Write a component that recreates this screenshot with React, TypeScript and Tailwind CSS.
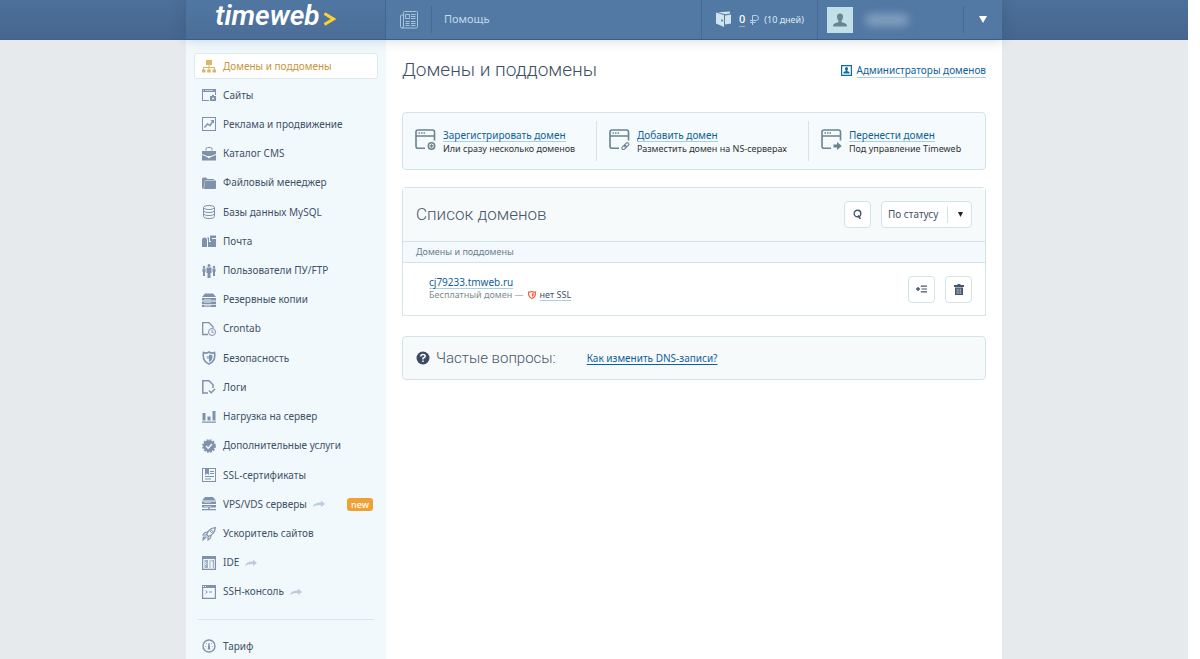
import React from 'react';

type IconProps = { className?: string };

function Svg({ size = 14, className = '', children }: { size?: number; className?: string; children: React.ReactNode }) {
  return (
    <svg width={size} height={size} viewBox={`0 0 ${size} ${size}`} fill="currentColor" className={`shrink-0 ${className}`} aria-hidden="true">
      {children}
    </svg>
  );
}

const icons: Record<string, React.ReactNode> = {
  domains: (
    <>
      <path d="M4 1h6v5H4z" />
      <path d="M6.500 6h1v2H13v3h-1V9H7.500v2h-1V9H2v2H1V8h5.500z" />
      <path d="M0 10.500h3.500v3H0zM5.200 10.500h3.600v3H5.200zM10.500 10.500H14v3h-3.500z" />
    </>
  ),
  sites: (
    <>
      <path d="M0 1h14v6h-1V4H1v8h6v1H0z" />
      <path d="M1 2h1v1H1zM3 2h8v1H3z" fill="#f1f9fd" opacity="0.6" />
      <path d="M8 8h2V7h2v1h2v5H8z" />
      <circle cx="11" cy="10.500" r="1" fill="#f1f9fd" />
    </>
  ),
  promo: (
    <>
      <path d="M0 0h14v14H0zM1 1v12h12V1z" fillRule="evenodd" />
      <path d="M2.500 10.500l3-3.500 2.500 1.500L11 4" fill="none" stroke="currentColor" strokeWidth="1.400" />
      <path d="M8.500 3H12v3.500z" />
    </>
  ),
  cms: (
    <>
      <path d="M4 3.500V2q0-1.500 1.500-1.500h3Q10 .5 10 2v1.500" fill="none" stroke="currentColor" />
      <path d="M0 4h14v3l-5 2H5L0 7z" />
      <path d="M0 8l5 2 2 1.500L9 10l5-2v5.500H0z" />
    </>
  ),
  files: (
    <>
      <path d="M0 3q0-1.500 1.500-1.500H4L5.500 3H12v1H3L1.500 13Q0 13 0 11.500z" />
      <path d="M3 4.500h11V12q0 1-1 1H2z" />
    </>
  ),
  mysql: (
    <g fill="none" stroke="currentColor">
      <ellipse cx="7" cy="2.500" rx="5.500" ry="2" />
      <path d="M1.500 2.500v9c0 2.700 11 2.700 11 0v-9M1.500 5.500c0 2.700 11 2.700 11 0M1.500 8.500c0 2.700 11 2.700 11 0" />
    </g>
  ),
  mail: (
    <>
      <path d="M0 6q0-2.500 2.500-2.500T5 6v7H0zM6 6q0-1.500-1-2.500h2V8h2V5h5v8H6z" />
      <path d="M8 1.500h6V4h-4v3H8z" />
    </>
  ),
  users: (
    <>
      <circle cx="7" cy="1.500" r="1.500" />
      <circle cx="2" cy="3" r="1.200" />
      <circle cx="12" cy="3" r="1.200" />
      <path d="M4.500 3.500h5V9h-1v5h-3V9h-1zM.5 4.500h3V8H3v4H1V8H.5zM10.500 4.500h3V8H13v4h-2V8h-.5z" />
    </>
  ),
  backup: (
    <>
      <path d="M3 .5h8L14 4H0zM0 5h14v2.500H0zM0 8.500h14V11H0zM0 11.800h14V14H0z" />
      <path d="M2 6h7v.6H2zM2 9.500h7v.6H2zM2 12.600h7v.6H2z" fill="#f1f9fd" />
    </>
  ),
  crontab: (
    <g fill="none" stroke="currentColor">
      <path d="M6 12.500H.7V.7H7l4 4v1.500" strokeWidth="1.300" />
      <circle cx="10" cy="10" r="3.500" />
      <path d="M10 8v2.300h1.800" />
    </g>
  ),
  security: (
    <>
      <path d="M1.500 1.500C3.500 2.500 5.500 2 7 1c1.500 1 3.500 1.500 5.500.5C13.500 7 12 11 7 13 2 11 .5 7 1.500 1.500z" fill="none" stroke="currentColor" strokeWidth="1.600" />
      <path d="M7 3.500l3.500.8C10.500 8 10 9.500 7 11z" />
      <path d="M4.500 5H7v3H5z" opacity="0.6" />
    </>
  ),
  logs: (
    <g fill="none" stroke="currentColor" strokeWidth="1.500">
      <path d="M6 13H.8V.8H7l4 4V8" />
      <path d="M7 10.500l2.200 2.200L13 9" />
    </g>
  ),
  load: <path d="M.5 3h3v7.500h-3zM5.500 6.500h3v4h-3zM10.500 1h3v9.500h-3zM0 11.500h14v1.200H0z" />,
  extra: (
    <>
      <circle cx="7" cy="7" r="5.800" />
      <circle cx="7" cy="7" r="5.900" fill="none" stroke="currentColor" strokeWidth="2" strokeDasharray="1.800 1.290" />
      <path d="M4 7l2.200 2.200L10 5" fill="none" stroke="#f1f9fd" strokeWidth="1.500" />
    </>
  ),
  ssl: (
    <>
      <path d="M0 0h14v14H0zM1 1v12h12V1z" fillRule="evenodd" />
      <path d="M3 0h4v7L5 5.500 3 7zM8 3h4v1H8zM8 5h4v1H8zM3 8h9v1H3zM3 10.500h6v1H3z" />
    </>
  ),
  vps: (
    <>
      <path d="M3 0h8l3 3.500H0zM0 4.500h14V7H0zM0 8h14v2.500H0zM6.300 10.500h1.400V12H14v1.200H0V12h6.300z" />
      <path d="M2 5.500h7v.6H2zM2 9h7v.6H2z" fill="#f1f9fd" />
    </>
  ),
  rocket: (
    <g fill="none" stroke="currentColor">
      <path d="M13.300.700C9.500 1 6.500 3 4.500 7.500l2 2C11 7.500 13 4.500 13.300.700z" strokeWidth="1.300" />
      <circle cx="9.500" cy="4.500" r="1" />
      <path d="M6 5L3 5.500 1 8h3M9 8l-.5 3L6 13v-3M4.500 9.500L.5 13.500M2.500 9.500L.5 11.500" strokeWidth="1.100" />
    </g>
  ),
  ide: (
    <>
      <path d="M0 0h14v14H0zM1.200 3v9.800h11.600V3z" fillRule="evenodd" />
      <path d="M2.500 4H6v8H2.500zM7.500 4h1v8h-1zM9.500 4H12v8h-1.200V5.500H9.500z" opacity="0.7" />
      <path d="M3 6l1.500 1.500L3 9" fill="none" stroke="#f1f9fd" />
    </>
  ),
  ssh: (
    <>
      <path d="M0 0h14v14H0zM1.200 3v9.800h11.600V3z" fillRule="evenodd" />
      <path d="M3.500 5.500l1.800 1.500-1.800 1.500M7 7h3" fill="none" stroke="currentColor" />
      <path d="M1 1h1v1H1zM3 1h1v1H3z" fill="#f1f9fd" />
    </>
  ),
  tariff: (
    <>
      <circle cx="7" cy="7" r="6" fill="none" stroke="currentColor" strokeWidth="1.400" />
      <path d="M6.500 4h1l.8 6.500H5.700z" />
      <path d="M3 7h1v1H3zM10 7h1v1h-1zM4 4h1v1H4zM9 4h1v1H9z" opacity="0.7" />
    </>
  ),
};

interface MenuItem {
  icon: string;
  label: string;
  active?: boolean;
  external?: boolean;
  badge?: string;
}

const MENU: MenuItem[] = [
  { icon: 'domains', label: 'Домены и поддомены', active: true },
  { icon: 'sites', label: 'Сайты' },
  { icon: 'promo', label: 'Реклама и продвижение' },
  { icon: 'cms', label: 'Каталог CMS' },
  { icon: 'files', label: 'Файловый менеджер' },
  { icon: 'mysql', label: 'Базы данных MySQL' },
  { icon: 'mail', label: 'Почта' },
  { icon: 'users', label: 'Пользователи ПУ/FTP' },
  { icon: 'backup', label: 'Резервные копии' },
  { icon: 'crontab', label: 'Crontab' },
  { icon: 'security', label: 'Безопасность' },
  { icon: 'logs', label: 'Логи' },
  { icon: 'load', label: 'Нагрузка на сервер' },
  { icon: 'extra', label: 'Дополнительные услуги' },
  { icon: 'ssl', label: 'SSL-сертификаты' },
  { icon: 'vps', label: 'VPS/VDS серверы', external: true, badge: 'new' },
  { icon: 'rocket', label: 'Ускоритель сайтов' },
  { icon: 'ide', label: 'IDE', external: true },
  { icon: 'ssh', label: 'SSH-консоль', external: true },
];

function MenuLink({ item }: { item: MenuItem }) {
  return (
    <a
      href="#"
      className={`flex h-[26px] items-center rounded-[3px] border pl-[7px] pr-1 ${
        item.active ? 'border-[#dfe9ec] bg-white text-[#c8953c]' : 'border-transparent text-[#3f5166]'
      }`}
    >
      <Svg className={item.active ? 'text-[#dcb568]' : 'text-[#8091ab]'}>{icons[item.icon]}</Svg>
      <span className="ml-[7px] whitespace-nowrap">{item.label}</span>
      {item.external && (
        <svg width="12" height="8" viewBox="0 0 12 8" fill="#bfcbdc" className="ml-[6px] shrink-0" aria-hidden="true">
          <path d="M0 7C1 3.500 4 2.500 8 2.500V.5L12 4 8 7V5C4.500 4.800 2 5.500 0 7z" />
        </svg>
      )}
      {item.badge && (
        <span className="ml-auto rounded-[3px] bg-[#f0a136] px-1 text-[9px] font-medium leading-[13px] text-white">{item.badge}</span>
      )}
    </a>
  );
}

function Sidebar() {
  return (
    <nav className="flex w-[200px] shrink-0 flex-col bg-[#f1f9fd] px-2 pt-[13px]">
      <ul className="flex flex-1 flex-col justify-between">
        {MENU.map((item) => (
          <li key={item.label}>
            <MenuLink item={item} />
          </li>
        ))}
      </ul>
      <hr className="mx-1 mb-[13px] mt-[14px] border-[#dbe6ec]" />
      <MenuLink item={{ icon: 'tariff', label: 'Тариф' }} />
    </nav>
  );
}

function Header() {
  return (
    <header className="relative z-10 flex h-10 justify-center border-b border-[#41618a] bg-linear-to-b from-[#4b7099] to-[#466690]">
      <div className="flex w-[816px] bg-[#5278a4] text-white shadow-[0_0_12px_rgba(40,60,90,0.25)]">
        <a href="#" className="flex w-[200px] justify-center border-r border-[#42658f] bg-linear-to-b from-[#5077a2] to-[#4b6e98] pr-5">
          <span className="font-['Roboto',sans-serif] text-[28px] font-semibold italic leading-[32px]">timeweb</span>
          <svg width="12" height="14" viewBox="0 0 12 14" fill="none" stroke="#ffd02e" strokeWidth="3" className="ml-1 mt-3 shrink-0" aria-hidden="true">
            <path d="M.5 1.500L9.500 7l-9 5.500" />
          </svg>
        </a>
        <button type="button" aria-label="Новости" className="flex w-[45px] items-center justify-center text-[#a9c5dc]">
          <svg width="18" height="18" viewBox="0 0 18 18" fill="none" stroke="currentColor" aria-hidden="true">
            <path d="M3.500 1.500q0-1 1-1h12q1 0 1 1v14q0 1.500-1.500 1.500H2Q.5 17 .5 15.500V5q0-1 1-1h2zM3.500 4v11q0 2-1.500 2" />
            <path d="M5.500 3.500h4v4h-4zM11 3.500h4.500M11 5.500h4.500M11 7.500h4.500M5.500 10.500h4M5.500 12.500h4M5.500 14.500h4M11 10.500h4.500M11 12.500h4.500M11 14.500h4.500" />
          </svg>
        </button>
        <a href="#" className="my-[6px] flex items-center border-l border-[#466a95] px-3 text-[11px] text-[#c4d9e9]">
          Помощь
        </a>
        <div className="ml-auto flex w-[116px] items-center border-l border-[#466a95] pl-[14px]">
          <svg width="15" height="17" viewBox="0 0 15 17" fill="#cfe4ee" className="shrink-0" aria-hidden="true">
            <path d="M0 1.500L8 4v12l-8-3.500zM2 1.200L14 .5v2L9 3.200zM9 4.500l6-1v9l-6 1z" />
            <circle cx="6" cy="9.500" r="1" fill="#5278a4" />
          </svg>
          <a href="#" className="ml-2 border-b border-[#8eb0d0] text-[11px] font-medium leading-[14px]">0</a>
          <svg width="9" height="10" viewBox="0 0 9 10" fill="none" stroke="#b9cfe2" className="ml-[5px] shrink-0" aria-hidden="true">
            <path d="M2.500 10V.5H6q2.500 0 2.500 2.500T6 5.500H0M0 7.500h5.500" />
          </svg>
          <span className="ml-[5px] whitespace-nowrap text-[9px] text-[#dfebf4]">(10 дней)</span>
        </div>
        <div className="flex w-[185px] items-center border-l border-[#466a95] pl-[9px]">
          <span className="flex size-[26px] items-center justify-center bg-[#c2e0ea] text-[#69868f]">
            <Svg>
              <path d="M4 3.500Q4 .5 7 .5t3 3Q10 6.500 8.500 8v1l4 1.500q1.500.5 1.500 3H0q0-2.500 1.500-3l4-1.500V8Q4 6.500 4 3.500z" />
            </Svg>
          </span>
          <span className="ml-3 h-3 w-11 rounded-full bg-[#a5bbd1]/60 blur-[4px]" />
          <button type="button" aria-label="Меню аккаунта" className="my-[6px] ml-auto flex w-[39px] items-center justify-center self-stretch border-l border-[#466a95]">
            <svg width="8" height="7" viewBox="0 0 8 7" fill="#fff" aria-hidden="true">
              <path d="M0 0h8L4 7z" />
            </svg>
          </button>
        </div>
      </div>
    </header>
  );
}

function WindowIcon({ children }: { children: React.ReactNode }) {
  return (
    <svg width="21" height="21" viewBox="0 0 21 21" fill="none" stroke="#68848f" strokeWidth="1.600" className="shrink-0" aria-hidden="true">
      <path d="M10 19.300H3Q1 19.300 1 17.300V3q0-2 2-2h14.500q2 0 2 2v8.500M1 7h18.500" />
      <path d="M3.500 4h1.500M6 4h1.500M8.500 4H10" />
      {children}
    </svg>
  );
}

const ACTIONS = [
  {
    title: 'Зарегистрировать домен',
    text: 'Или сразу несколько доменов',
    box: 'w-[181px]',
    icon: (
      <>
        <circle cx="16.500" cy="17" r="3.200" strokeWidth="1.500" />
        <path d="M14.800 17h3.400M16.500 15.300v3.400" strokeWidth="1.300" />
      </>
    ),
  },
  {
    title: 'Добавить домен',
    text: 'Разместить домен на NS-серверах',
    box: 'w-[212px] border-l border-[#d3e3e8] pl-3',
    icon: (
      <g transform="rotate(-45 16.500 17)" strokeWidth="1.100">
        <rect x="12" y="15.500" width="5" height="3" rx="1.500" />
        <rect x="15.500" y="15.500" width="5" height="3" rx="1.500" />
      </g>
    ),
  },
  {
    title: 'Перенести домен',
    text: 'Под управление Timeweb',
    box: 'flex-1 border-l border-[#d3e3e8] pl-3',
    icon: <path d="M12.500 15.500h3.500v-2.500l4.800 4-4.800 4V18.500h-3.500z" fill="#68848f" stroke="none" />,
  },
];

function Shield({ className }: IconProps) {
  return (
    <svg width="8" height="8" viewBox="0 0 8 8" className={className} aria-hidden="true">
      <path d="M.6 1Q2.500 1.500 4 .6 5.500 1.500 7.400 1 8 6 4 7.400 0 6 .6 1z" fill="none" stroke="#f4633f" strokeWidth="1.200" />
      <path d="M4 2l2 .5Q6 5 4 6z" fill="#f4633f" />
    </svg>
  );
}

export default function App() {
  return (
    <div className="min-h-screen bg-white pr-3 font-['Noto_Sans','Open_Sans',sans-serif] text-[10px]">
      <div className="flex min-h-screen flex-col bg-[#e6eaed]">
        <Header />
        <div className="mx-auto flex w-[816px] flex-1 bg-white">
          <Sidebar />
          <main className="min-w-0 flex-1 px-4 pt-4">
            <div className="flex items-center justify-between">
              <h1 className="font-['Roboto',sans-serif] text-[19px] font-light leading-[28px] text-[#3e4f63]">Домены и поддомены</h1>
              <a href="#" className="flex items-center gap-[5px] text-[#0f5f9c]">
                <svg width="11" height="11" viewBox="0 0 11 11" fill="#0f6aa8" aria-hidden="true">
                  <path d="M0 0h11v11H0zM1.200 1.200v8.600h8.600V1.200z" fillRule="evenodd" />
                  <path d="M4 3.500Q4 2 5.500 2T7 3.500 6 6l2.500 1v1.500h-6V7L5 6Q4 5 4 3.500z" />
                </svg>
                <span className="border-b border-[#a9cfe0] leading-[14px]">Администраторы доменов</span>
              </a>
            </div>

            <section className="mt-7 flex rounded-[4px] border border-[#d3e3e8] bg-[#f5fafd] px-3 py-2">
              {ACTIONS.map((action) => (
                <div key={action.title} className={`flex h-10 gap-[7px] pt-2 ${action.box}`}>
                  <WindowIcon>{action.icon}</WindowIcon>
                  <div className="flex flex-col items-start whitespace-nowrap">
                    <a href="#" className="border-b border-[#a9cfe0] leading-[12px] text-[#0f5f9c]">{action.title}</a>
                    <span className="text-[9px] leading-[14px] text-[#333]">{action.text}</span>
                  </div>
                </div>
              ))}
            </section>

            <section className="mt-[17px] rounded-t-[4px] border border-[#d3e3e8]">
              <div className="flex h-[53px] items-center bg-[#f7fafb] px-[13px]">
                <h2 className="font-['Roboto',sans-serif] text-[17px] font-light text-[#46566a]">Список доменов</h2>
                <button type="button" aria-label="Поиск" className="ml-auto flex size-[27px] items-center justify-center rounded-[4px] border border-[#d3e3e8] bg-white">
                  <svg width="9" height="11" viewBox="0 0 9 11" fill="none" stroke="#46566a" strokeWidth="1.400" aria-hidden="true">
                    <circle cx="4.500" cy="4.500" r="3.300" />
                    <path d="M5 6.500l2.500 3.500" />
                  </svg>
                </button>
                <div className="relative ml-[10px]">
                  <select aria-label="Сортировка" className="h-[27px] w-[91px] appearance-none rounded-[4px] border border-[#d3e3e8] bg-white pl-[6px] text-[10px] text-[#3f5166]">
                    <option>По статусу</option>
                  </select>
                  <span className="pointer-events-none absolute inset-y-[5px] right-0 flex w-[25px] items-center justify-center border-l border-[#d3e3e8]">
                    <svg width="5" height="5" viewBox="0 0 5 5" fill="#222" aria-hidden="true">
                      <path d="M0 0h5L2.500 5z" />
                    </svg>
                  </span>
                </div>
              </div>
              <div className="border-y border-[#d3e3e8] bg-[#f3f9fc] px-[13px] text-[9px] leading-[20px] text-[#68808b]">Домены и поддомены</div>
              <div className="flex h-[52px] items-center gap-[10px] bg-white pl-[26px] pr-[13px]">
                <div className="mr-auto flex flex-col items-start">
                  <a href="#" className="border-b border-[#a9cfe0] leading-[12px] text-[#0f5f9c]">cj79233.tmweb.ru</a>
                  <div className="flex items-center pb-[2px] text-[9px] leading-[12px] text-[#7c8c93]">
                    Бесплатный домен —
                    <Shield className="mx-1" />
                    <a href="#" className="border-b border-[#a9cfe0] leading-[11px] text-[#3f5166]">нет SSL</a>
                  </div>
                </div>
                <button type="button" aria-label="Добавить поддомен" className="flex size-[27px] items-center justify-center rounded-[4px] border border-[#d3e3e8]">
                  <svg width="11" height="8" viewBox="0 0 11 8" fill="#46566f" aria-hidden="true">
                    <path d="M0 3.200h1.300V2h1.400v1.200H4v1.600H2.700V6H1.300V4.800H0zM5 .5h6v1.200H4.500zM5.500 3.400H11v1.200H5.500zM4.500 6.300H11v1.200H5z" />
                  </svg>
                </button>
                <button type="button" aria-label="Удалить" className="flex size-[27px] items-center justify-center rounded-[4px] border border-[#d3e3e8]">
                  <svg width="10" height="11" viewBox="0 0 10 11" fill="#46566f" aria-hidden="true">
                    <path d="M3.500 0h3v1H10v2H0V1h3.500zM1 3.500h8V11H1z" />
                    <path d="M2.800 4.500h.5v5.500h-.5zM4.700 4.500h.5v5.500h-.5zM6.600 4.500h.5v5.500h-.5z" fill="#fff" />
                  </svg>
                </button>
              </div>
            </section>

            <section className="mt-5 flex h-11 items-center rounded-[4px] border border-[#d3e3e8] bg-[#f7fafb] px-[13px]">
              <svg width="14" height="14" viewBox="0 0 14 14" aria-hidden="true">
                <circle cx="7" cy="7" r="6.500" fill="#3c4a63" />
                <path d="M4.800 5.500Q4.800 3.500 7 3.500t2.200 1.800Q9.200 6.500 7 7.200v1.300M7 9.500V11" fill="none" stroke="#fff" strokeWidth="1.500" />
              </svg>
              <h2 className="ml-[6px] font-['Roboto',sans-serif] text-[15px] font-light text-[#46566a]">Частые вопросы:</h2>
              <a href="#" className="ml-[31px] text-[#0f5f9c] underline underline-offset-2">Как изменить DNS-записи?</a>
            </section>
          </main>
        </div>
      </div>
    </div>
  );
}
